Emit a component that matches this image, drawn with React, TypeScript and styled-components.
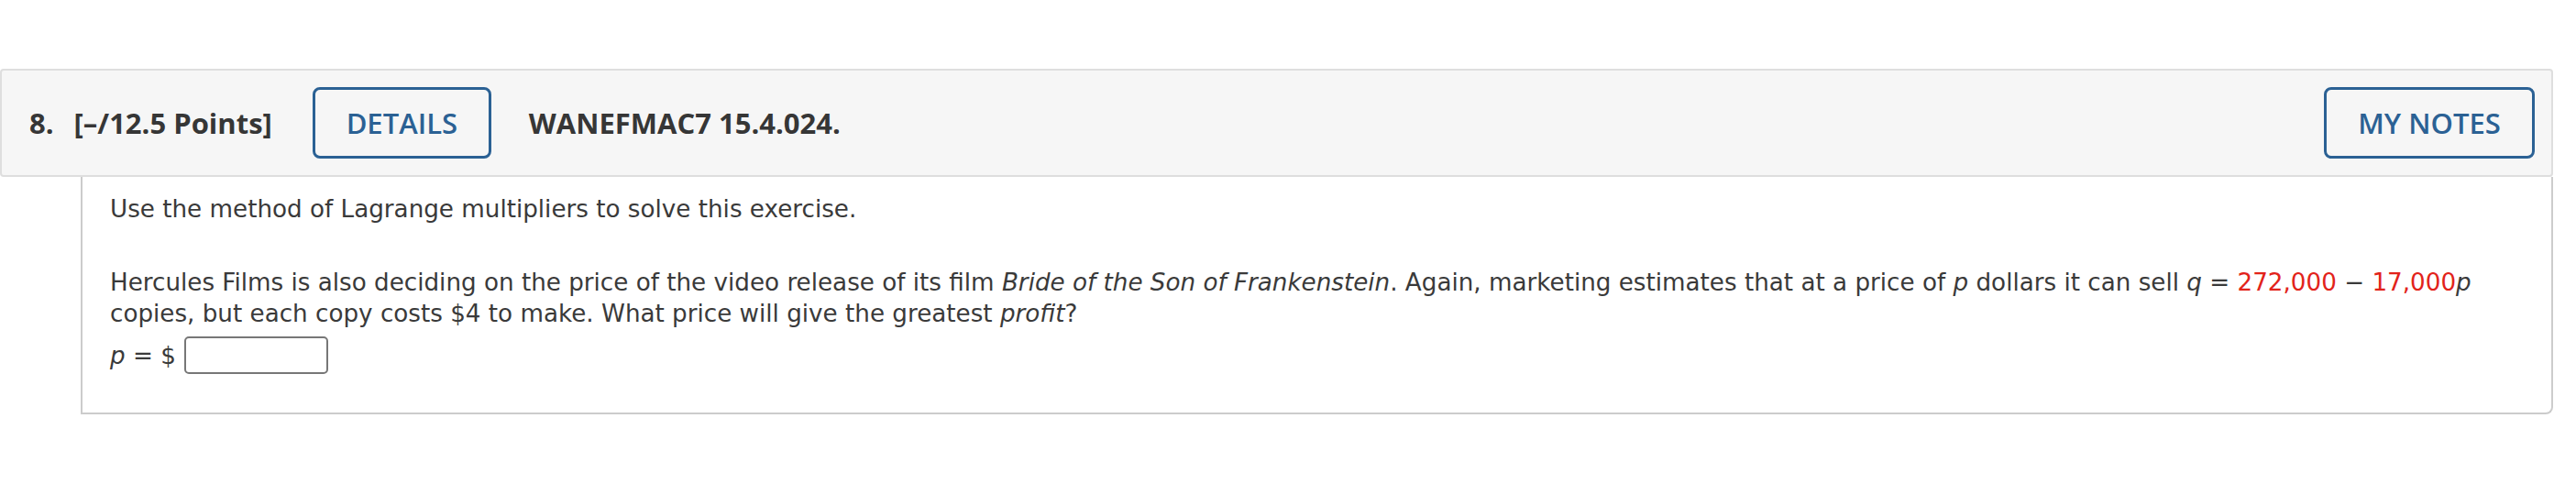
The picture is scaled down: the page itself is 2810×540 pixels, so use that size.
import styled, { createGlobalStyle } from "styled-components";

const GlobalStyle = createGlobalStyle`
    html, body {
        margin: 0;
        padding: 0;
        background: #ffffff;
    }
`;

const Page = styled.div`
    padding-top: 75px;
    width: 2785px;
`;

const Header = styled.div`
    box-sizing: border-box;
    height: 118px;
    display: flex;
    align-items: center;
    padding: 0 18px 0 30px;
    background-color: #f6f6f6;
    border: 2px solid #dedede;
    border-radius: 4px;
    font-family: "Open Sans", "Liberation Sans", sans-serif;
    color: #363636;
`;

const Number = styled.span`
    font-size: 31px;
    font-weight: 700;
`;

const Points = styled.span`
    font-size: 31px;
    font-weight: 700;
    margin-left: 22px;
`;

const Title = styled.span`
    font-size: 31px;
    font-weight: 700;
    margin-left: 41px;
    flex: 1;
`;

const OutlineButton = styled.button<{ $w: number; $gap?: number }>`
    box-sizing: border-box;
    width: ${props => props.$w}px;
    height: 78px;
    margin-left: ${props => props.$gap ?? 0}px;
    background: transparent;
    border: 3px solid #2b6194;
    border-radius: 8px;
    color: #2b6194;
    font-family: "Open Sans", "Liberation Sans", sans-serif;
    font-size: 31px;
    font-weight: 600;
    padding: 0;
    cursor: pointer;
`;

const Body = styled.div`
    box-sizing: border-box;
    margin-left: 88px;
    width: 2697px;
    padding: 18px 30px 42px 30px;
    border: 2px solid #cccccc;
    border-top: none;
    border-radius: 0 0 8px 0;
    font-family: "DejaVu Sans", Verdana, sans-serif;
    font-size: 26.2px;
    line-height: 34px;
    color: #3a3a3a;
`;

const Para = styled.p<{ $top?: number }>`
    margin: ${props => props.$top ?? 0}px 0 0 0;
`;

const Red = styled.span`
    color: #e2231a;
`;

const AnswerRow = styled.div`
    display: flex;
    align-items: center;
    gap: 9px;
    margin-top: 8px;
`;

const AnswerInput = styled.input`
    box-sizing: border-box;
    width: 157px;
    height: 41px;
    border: 2px solid #777777;
    border-radius: 5px;
    background: #ffffff;
    outline: none;
`;

export default function App() {
    return (
        <>
            <GlobalStyle />
            <Page>
                <Header>
                    <Number>8.</Number>
                    <Points>[–/12.5 Points]</Points>
                    <OutlineButton $w={195} $gap={44}>DETAILS</OutlineButton>
                    <Title>WANEFMAC7 15.4.024.</Title>
                    <OutlineButton $w={230}>MY NOTES</OutlineButton>
                </Header>
                <Body>
                    <Para>Use the method of Lagrange multipliers to solve this exercise.</Para>
                    <Para $top={46}>
                        Hercules Films is also deciding on the price of the video release of its film{" "}
                        <i>Bride of the Son of Frankenstein</i>. Again, marketing estimates that at a price of{" "}
                        <i>p</i> dollars it can sell <i>q</i> = <Red>272,000</Red> − <Red>17,000</Red><i>p</i>{" "}
                        copies, but each copy costs $4 to make. What price will give the greatest <i>profit</i>?
                    </Para>
                    <AnswerRow>
                        <span><i>p</i> = $</span>
                        <AnswerInput type="text" />
                    </AnswerRow>
                </Body>
            </Page>
        </>
    );
}
